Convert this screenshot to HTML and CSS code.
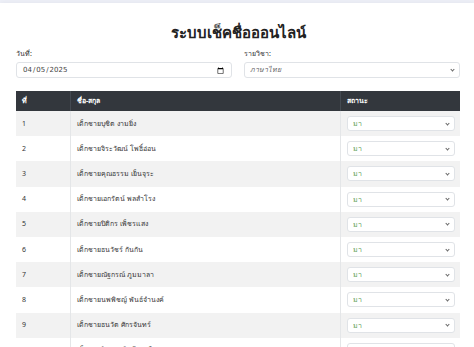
FILE: index.html
```html
<!DOCTYPE html>
<html lang="th">
<head>
  <meta charset="UTF-8" />
  <meta name="viewport" content="width=device-width, initial-scale=1.0"/>
  <title>ระบบเช็คชื่อออนไลน์</title>
  <link rel="stylesheet" href="styles.css">
</head>
<body>
  <div class="container">
    <h1>ระบบเช็คชื่อออนไลน์</h1>

    <!-- วันที่ / วิชา -->
    <div class="filters">
      <div class="field">
        <label for="checkDate">วันที่:</label>
        <input type="date" id="checkDate" class="form-control" value="2025-04-05" />
      </div>
      <div class="field">
        <label for="subject">รายวิชา:</label>
        <div class="select-wrap">
          <select id="subject" class="form-select subject">
            <option>ภาษาไทย</option>
            <option>คณิตศาสตร์</option>
            <option>วิทยาศาสตร์</option>
          </select>
          <span class="chevron"></span>
        </div>
      </div>
    </div>

    <table class="student-table">
      <thead>
        <tr>
          <th class="col-no">ที่</th>
          <th class="col-name">ชื่อ-สกุล</th>
          <th class="col-status">สถานะ</th>
        </tr>
      </thead>
      <tbody id="studentRows"></tbody>
    </table>
  </div>

  <script>
    const students = [
      'เด็กชายบุชิต งามยิ่ง',
      'เด็กชายจิระวัฒน์ โพธิ์อ่อน',
      'เด็กชายคุณธรรม เย็นจุระ',
      'เด็กชายเอกรัตน์ พลสำโรง',
      'เด็กชายปิติกร เพ็ชรแสง',
      'เด็กชายธนวัชร์ กันกัน',
      'เด็กชายณัฐกรณ์ ภูมมาลา',
      'เด็กชายนพพิชญ์ พันธ์จำนงค์',
      'เด็กชายธนวัต ศักรจันทร์',
      'เด็กชายปิยะพงษ์ ศรีบุญเรือง'
    ];

    const tbody = document.getElementById('studentRows');

    students.forEach((name, i) => {
      const tr = document.createElement('tr');
      tr.innerHTML = `
        <td>${i + 1}</td>
        <td>${name}</td>
        <td>
          <div class="select-wrap">
            <select class="form-select status">
              <option>มา</option>
              <option>ขาด</option>
              <option>ลา</option>
              <option>สาย</option>
            </select>
            <span class="chevron"></span>
          </div>
        </td>`;
      tbody.appendChild(tr);
    });
  </script>
</body>
</html>
```

FILE: styles.css
```css
body {
  margin: 0;
  background-color: #eef0f8;
  font-family: "Noto Sans", "DejaVu Sans", sans-serif;
  color: #212529;
}
.container {
  margin-top: 3px;
  background-color: #fff;
  padding: 16px 14px 16px 16px;
  box-shadow: 0 0 6px rgba(0, 0, 0, 0.06);
  min-height: 400px;
}
h1 {
  margin: 0 0 6px;
  height: 24px;
  text-align: center;
  font-size: 15px;
  line-height: 26px;
  font-weight: bold;
  color: #222;
}
.filters {
  display: grid;
  grid-template-columns: 1fr 1fr;
  gap: 12px;
}
label {
  display: block;
  height: 10px;
  font-size: 7px;
  line-height: 10px;
  margin-bottom: 3px;
  color: #333;
}
.form-control,
.form-select {
  display: block;
  box-sizing: border-box;
  width: 100%;
  height: 16px;
  border: 1px solid #e0e3e7;
  border-radius: 3px;
  background-color: #fff;
  font-family: "DejaVu Sans", sans-serif;
  font-size: 7px;
  line-height: 14px;
  padding: 0 5px;
  margin: 0;
  color: #444;
}
.form-select {
  -webkit-appearance: none;
  appearance: none;
  font-family: "Noto Sans", "DejaVu Sans", sans-serif;
}
.subject {
  color: #666;
  font-style: italic;
}
.select-wrap {
  position: relative;
}
.chevron {
  position: absolute;
  right: 6px;
  top: 50%;
  width: 2px;
  height: 2px;
  margin-top: -2px;
  border-right: 1px solid #666;
  border-bottom: 1px solid #666;
  transform: rotate(45deg);
  pointer-events: none;
}
.student-table {
  width: 100%;
  margin-top: 13px;
  border-collapse: collapse;
  font-size: 7px;
  line-height: 10px;
}
.student-table th {
  background-color: #33373d;
  color: #fff;
  font-weight: bold;
  text-align: left;
  height: 20px;
  padding: 0 6px;
  border-left: 1px solid #444a52;
}
.student-table th:first-child,
.student-table td:first-child {
  border-left: none;
}
.student-table td {
  height: 25.2px;
  padding: 0 5px 0 6px;
  border-left: 1px solid #e4e6e8;
  color: #333;
  vertical-align: middle;
}
.student-table tbody tr:nth-child(odd) {
  background-color: #f2f2f2;
}
.col-no { width: 42px; }
.col-name { width: 257px; }
.status {
  height: 15px;
  color: #5a9e52;
}
```
